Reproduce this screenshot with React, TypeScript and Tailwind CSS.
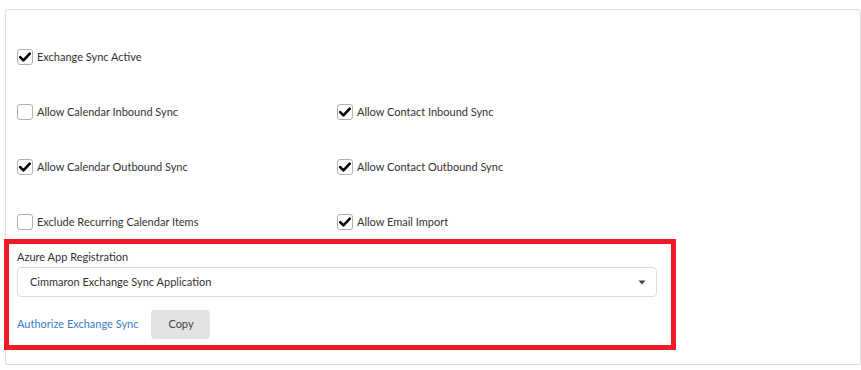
import React from "react";

type Opt = { label: string; checked: boolean };

const ROWS: [Opt, Opt | null][] = [
  [{ label: "Exchange Sync Active", checked: true }, null],
  [
    { label: "Allow Calendar Inbound Sync", checked: false },
    { label: "Allow Contact Inbound Sync", checked: true },
  ],
  [
    { label: "Allow Calendar Outbound Sync", checked: true },
    { label: "Allow Contact Outbound Sync", checked: true },
  ],
  [
    { label: "Exclude Recurring Calendar Items", checked: false },
    { label: "Allow Email Import", checked: true },
  ],
];

function Check({ label, checked }: Opt) {
  return (
    <label className="flex items-center h-4 w-[320px]">
      <span className="flex items-center justify-center w-4 h-4 rounded-[3px] border border-[#b0b0b0] bg-white">
        {checked && (
          <svg width="12" height="10" viewBox="0 0 12 10">
            <path d="M1.2 5.2 L4.4 8.4 L10.8 1.6" fill="none" stroke="#000" strokeWidth="2.6" strokeLinecap="round" strokeLinejoin="round" />
          </svg>
        )}
      </span>
      <span className="ml-1 text-[11px] text-[#333]">{label}</span>
    </label>
  );
}

export default function App() {
  return (
    <div className="pl-[5px] pt-[9px] font-['Lato','Liberation_Sans',sans-serif]">
      <div className="w-[856px] h-[356px] border border-[#dcdcdc] rounded-[3px] shadow-[0_1px_1px_rgba(0,0,0,0.08)] bg-white">
        <div className="pl-[11px] pt-[39px] flex flex-col gap-[39px]">
          {ROWS.map(([a, b], i) => (
            <div key={i} className="flex">
              <Check {...a} />
              {b && <Check {...b} />}
            </div>
          ))}
        </div>
        <div className="mt-[9px] -ml-[2px] w-[672px] border-[5px] border-[#ed1c24] pl-2 pr-[14px] pt-[5px] pb-[6px]">
          <div className="h-4 leading-4 text-[11px] text-[#333]">Azure App Registration</div>
          <div className="mt-[2px] h-[30px] flex items-center justify-between border border-[#dddddd] rounded-[4px] pl-3 pr-[10px]">
            <span className="text-[11px] text-[#333]">Cimmaron Exchange Sync Application</span>
            <svg width="8" height="5" viewBox="0 0 8 5">
              <path d="M0.5 0.5 H7.5 L4 4.5 Z" fill="#444" />
            </svg>
          </div>
          <div className="mt-[13px] h-[29px] flex items-center gap-[13px]">
            <a className="text-[11px] text-[#3a7ebf]">Authorize Exchange Sync</a>
            <button className="w-[59px] h-[29px] rounded-[4px] bg-[#e3e3e3] text-[11px] text-[#444]">Copy</button>
          </div>
        </div>
      </div>
    </div>
  );
}
